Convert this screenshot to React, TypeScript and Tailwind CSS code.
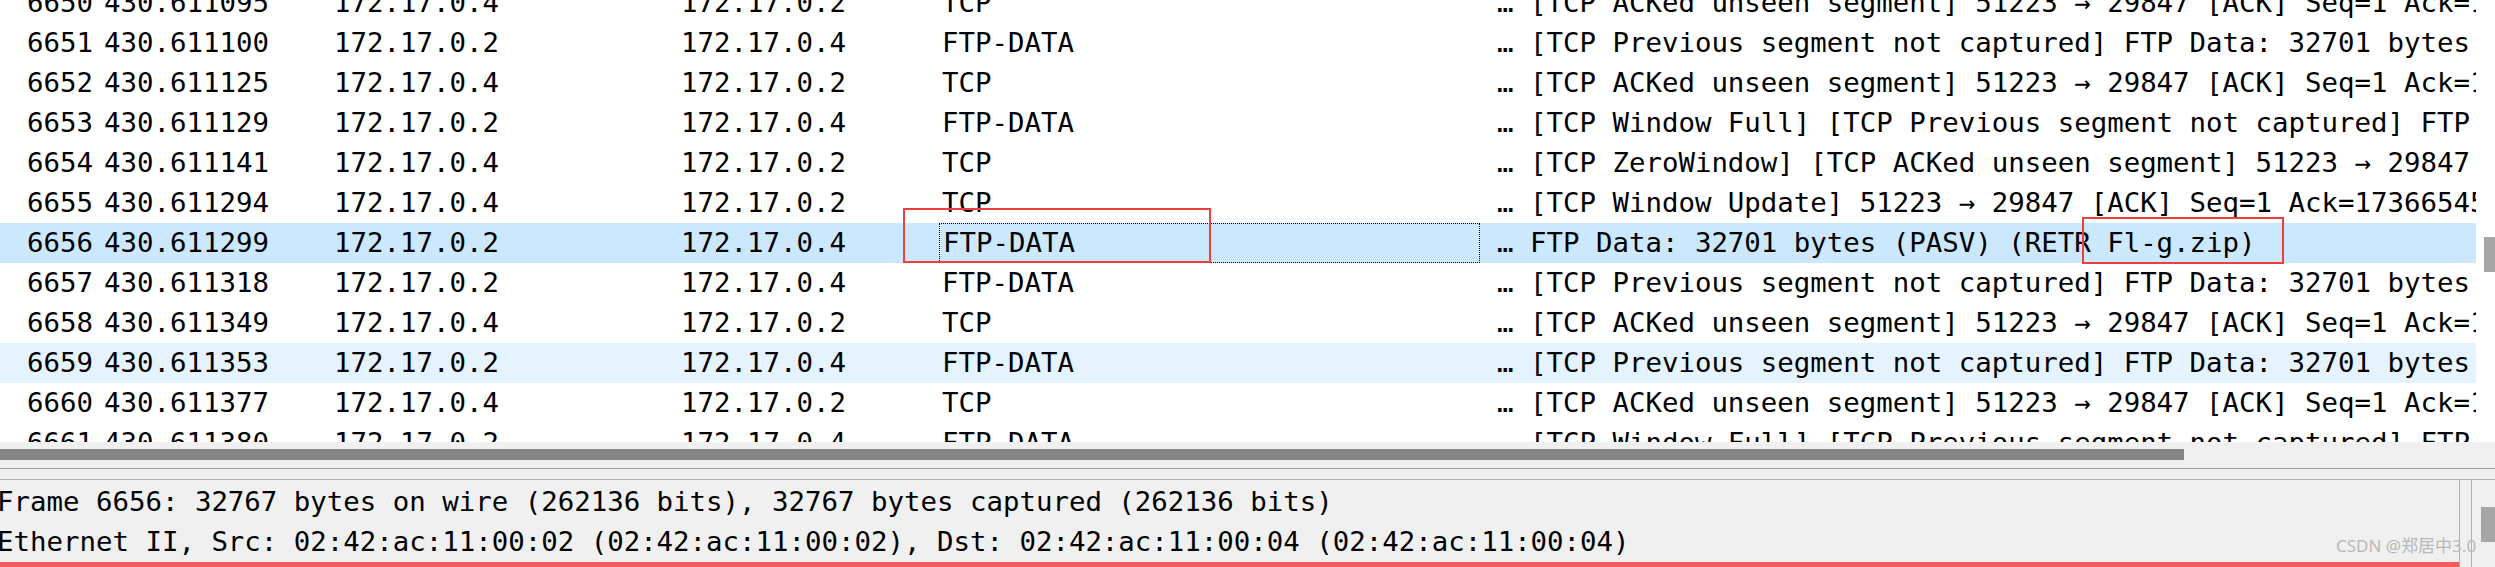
import React from "react";

interface Packet {
  no: number;
  time: string;
  src: string;
  dst: string;
  proto: string;
  info: string;
}

const ACK = "51223 → 29847 [ACK] Seq=1 Ack=17334562 Win=0 Len=0";

const packets: Packet[] = [
  { no: 6650, time: "430.611095", src: "172.17.0.4", dst: "172.17.0.2", proto: "TCP", info: `… [TCP ACKed unseen segment] ${ACK}` },
  { no: 6651, time: "430.611100", src: "172.17.0.2", dst: "172.17.0.4", proto: "FTP-DATA", info: "… [TCP Previous segment not captured] FTP Data: 32701 bytes (PASV) (RETR Fl-g.zip)" },
  { no: 6652, time: "430.611125", src: "172.17.0.4", dst: "172.17.0.2", proto: "TCP", info: `… [TCP ACKed unseen segment] ${ACK}` },
  { no: 6653, time: "430.611129", src: "172.17.0.2", dst: "172.17.0.4", proto: "FTP-DATA", info: "… [TCP Window Full] [TCP Previous segment not captured] FTP Data: 32701 bytes" },
  { no: 6654, time: "430.611141", src: "172.17.0.4", dst: "172.17.0.2", proto: "TCP", info: `… [TCP ZeroWindow] [TCP ACKed unseen segment] ${ACK}` },
  { no: 6655, time: "430.611294", src: "172.17.0.4", dst: "172.17.0.2", proto: "TCP", info: "… [TCP Window Update] 51223 → 29847 [ACK] Seq=1 Ack=17366545 Win=65535 Len=0" },
  { no: 6656, time: "430.611299", src: "172.17.0.2", dst: "172.17.0.4", proto: "FTP-DATA", info: "… FTP Data: 32701 bytes (PASV) (RETR Fl-g.zip)" },
  { no: 6657, time: "430.611318", src: "172.17.0.2", dst: "172.17.0.4", proto: "FTP-DATA", info: "… [TCP Previous segment not captured] FTP Data: 32701 bytes (PASV) (RETR Fl-g.zip)" },
  { no: 6658, time: "430.611349", src: "172.17.0.4", dst: "172.17.0.2", proto: "TCP", info: `… [TCP ACKed unseen segment] ${ACK}` },
  { no: 6659, time: "430.611353", src: "172.17.0.2", dst: "172.17.0.4", proto: "FTP-DATA", info: "… [TCP Previous segment not captured] FTP Data: 32701 bytes (PASV) (RETR Fl-g.zip)" },
  { no: 6660, time: "430.611377", src: "172.17.0.4", dst: "172.17.0.2", proto: "TCP", info: `… [TCP ACKed unseen segment] ${ACK}` },
  { no: 6661, time: "430.611380", src: "172.17.0.2", dst: "172.17.0.4", proto: "FTP-DATA", info: "… [TCP Window Full] [TCP Previous segment not captured] FTP Data: 32701 bytes" },
];

const PacketRow: React.FC<{ p: Packet }> = ({ p }) => {
  const selected = p.no === 6656;
  const hovered = p.no === 6659;
  const bg = selected ? "bg-[#cce8ff]" : hovered ? "bg-[#e5f3ff]" : "bg-white";
  return (
    <div className={`flex h-[40px] shrink-0 items-center whitespace-pre ${bg}`}>
      <div className="w-[104px] shrink-0 pl-[27px]">{p.no}</div>
      <div className="w-[230px] shrink-0">{p.time}</div>
      <div className="w-[347px] shrink-0">{p.src}</div>
      <div className="w-[258px] shrink-0">{p.dst}</div>
      <div
        className={`flex h-[40px] w-[541px] shrink-0 items-center pl-[3px] ${
          selected ? "border border-dotted border-black" : ""
        }`}
      >
        {p.proto}
      </div>
      <div className="min-w-0 flex-1 overflow-hidden pl-[17px]">{p.info}</div>
    </div>
  );
};

export default function App() {
  return (
    <div className="relative flex h-[567px] w-[2495px] flex-col overflow-hidden bg-[#f0f0f0] font-['DejaVu_Sans_Mono',monospace] text-[27.4px] text-black">
      {/* packet list */}
      <div className="flex h-[442px] shrink-0">
        <div className="flex min-w-0 flex-1 flex-col overflow-hidden bg-white">
          <div className="mt-[-17px] flex flex-col">
            {packets.map((p) => (
              <PacketRow key={p.no} p={p} />
            ))}
          </div>
        </div>
        <div className="flex w-[19px] shrink-0 flex-col bg-white pl-[8px]">
          <div className="mt-[237px] h-[35px] bg-[#a6a6a6]" />
        </div>
      </div>

      {/* horizontal scrollbar */}
      <div className="h-[26px] shrink-0 bg-[#f0f0f0] pt-[7px]">
        <div className="h-[11px] w-[2184px] bg-[#858585]" />
      </div>
      <div className="h-px shrink-0 bg-[#a0a0a0]" />
      <div className="h-[10px] shrink-0" />
      <div className="h-px shrink-0 bg-[#b0b0b0]" />

      {/* packet details */}
      <div className="flex min-h-0 flex-1">
        <div className="flex w-[2460px] shrink-0 flex-col overflow-hidden border-r border-[#b0b0b0] pt-[2px]">
          <div className="ml-[-3px] flex h-[40px] items-center whitespace-pre">
            Frame 6656: 32767 bytes on wire (262136 bits), 32767 bytes captured (262136 bits)
          </div>
          <div className="ml-[-3px] flex h-[40px] items-center whitespace-pre">
            Ethernet II, Src: 02:42:ac:11:00:02 (02:42:ac:11:00:02), Dst: 02:42:ac:11:00:04 (02:42:ac:11:00:04)
          </div>
          <div className="h-[40px] bg-[#fa5c5c]" />
        </div>
        <div className="w-[12px] shrink-0 border-r border-[#b0b0b0]" />
        <div className="flex flex-1 flex-col pl-[9px]">
          <div className="mt-[27px] h-[35px] bg-[#a6a6a6]" />
        </div>
      </div>

      {/* annotations */}
      <div className="absolute left-[903px] top-[208px] h-[55px] w-[308px] border-2 border-[#ef3e3e]" />
      <div className="absolute left-[2082px] top-[217px] h-[47px] w-[202px] border-2 border-[#ef3e3e]" />
      <div className="absolute left-[2336px] top-[535px] font-['Noto_Sans','Noto_Sans_CJK_SC',sans-serif] text-[17px] leading-[22px] text-[#b8b8b8]">
        CSDN @郑居中3.0
      </div>
    </div>
  );
}
